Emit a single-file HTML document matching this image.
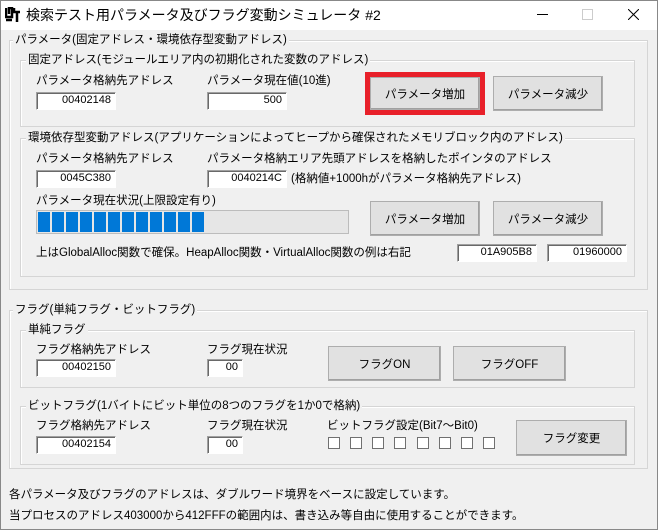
<!DOCTYPE html>
<html><head><meta charset="utf-8"><style>
*{box-sizing:border-box;margin:0;padding:0}
body{width:658px;height:530px;background:#f0f0f0;position:relative;overflow:hidden;font-family:"Liberation Sans","Noto Sans CJK JP",sans-serif;font-size:11.5px;color:#000}
.a{position:absolute;white-space:nowrap;line-height:14px}
.title{position:absolute;left:0;top:0;width:658px;height:30px;background:#fff}
.win{position:absolute;left:0;top:0;width:658px;height:530px;border:1px solid #888}
.g{position:absolute;border:1px solid #d5d5d5;box-shadow:inset 1px 1px 0 #fff}
.gl{position:absolute;background:#f0f0f0;padding:0 2px;line-height:14px;white-space:nowrap}
.e{position:absolute;background:#fff;border-top:1px solid #a0a0a0;border-left:1px solid #a0a0a0;border-bottom:1px solid #fff;border-right:1px solid #fff;box-shadow:inset 1px 1px 0 #696969;text-align:right;padding-right:4px;line-height:15px;font-size:11px}
.b{position:absolute;background:#e1e1e1;border:1px solid #adadad;box-shadow:inset -1px -1px 0 #a0a0a0;display:flex;align-items:center;justify-content:center}
.c{position:absolute;width:12px;height:12px;border:1px solid #707070;background:#fff;top:437px}
</style></head><body>
<div class="title"></div>
<svg class="a" style="left:5px;top:7px" width="16" height="16"><rect x="0" y="0" width="16" height="16" fill="#fff"/><path d="M1 1v9h6v-9h-3v6h-0M9 1v4h6M12 5v10M1 13h6" stroke="#000" stroke-width="2.5" fill="none"/></svg>
<div class="a" style="left:26px;top:7px;font-size:14px;line-height:16px">検索テスト用パラメータ及びフラグ変動シミュレータ #2</div>
<div class="a" style="left:537px;top:14px;width:11px;height:1px;background:#000"></div>
<div class="a" style="left:582px;top:9px;width:11px;height:11px;border:1px solid #ccc"></div>
<svg class="a" style="left:628px;top:9px" width="11" height="11"><path d="M0 0L11 11M11 0L0 11" stroke="#000" stroke-width="1"/></svg>
<div class="win"></div>

<div class="g" style="left:9px;top:40px;width:639px;height:250px"></div>
<div class="gl" style="left:13px;top:33px">パラメータ(固定アドレス・環境依存型変動アドレス)</div>
<div class="g" style="left:20px;top:60px;width:615px;height:67px"></div>
<div class="gl" style="left:26px;top:53px">固定アドレス(モジュールエリア内の初期化された変数のアドレス)</div>
<div class="a" style="left:36px;top:74px">パラメータ格納先アドレス</div>
<div class="a" style="left:207px;top:74px">パラメータ現在値(10進)</div>
<div class="e" style="left:36px;top:92px;width:80px;height:18px">00402148</div>
<div class="e" style="left:207px;top:92px;width:80px;height:18px">500</div>
<div class="a" style="left:365px;top:72px;width:120px;height:43px;border:5px solid #e8202a"></div>
<div class="b" style="left:370px;top:77px;width:110px;height:33px">パラメータ増加</div>
<div class="b" style="left:493px;top:76px;width:110px;height:35px">パラメータ減少</div>

<div class="g" style="left:20px;top:138px;width:615px;height:139px"></div>
<div class="gl" style="left:26px;top:131px">環境依存型変動アドレス(アプリケーションによってヒープから確保されたメモリブロック内のアドレス)</div>
<div class="a" style="left:36px;top:152px">パラメータ格納先アドレス</div>
<div class="a" style="left:207px;top:152px">パラメータ格納エリア先頭アドレスを格納したポインタのアドレス</div>
<div class="e" style="left:36px;top:170px;width:80px;height:18px">0045C380</div>
<div class="e" style="left:207px;top:170px;width:80px;height:18px">0040214C</div>
<div class="a" style="left:291px;top:172px">(格納値+1000hがパラメータ格納先アドレス)</div>
<div class="a" style="left:36px;top:194px">パラメータ現在状況(上限設定有り)</div>
<div class="a" style="left:36px;top:210px;width:313px;height:24px;border:1px solid #bcbcbc;background:#e6e6e6"></div>
<div class="a" style="left:38px;top:212px;width:166px;height:20px;background:repeating-linear-gradient(90deg,#0078d7 0 12px,#e6e6e6 12px 14px)"></div>
<div class="b" style="left:370px;top:201px;width:110px;height:35px">パラメータ増加</div>
<div class="b" style="left:493px;top:201px;width:110px;height:35px">パラメータ減少</div>
<div class="a" style="left:36px;top:246px">上はGlobalAlloc関数で確保。HeapAlloc関数・VirtualAlloc関数の例は右記</div>
<div class="e" style="left:457px;top:244px;width:80px;height:18px">01A905B8</div>
<div class="e" style="left:547px;top:244px;width:80px;height:18px">01960000</div>

<div class="g" style="left:9px;top:310px;width:639px;height:159px"></div>
<div class="gl" style="left:13px;top:303px">フラグ(単純フラグ・ビットフラグ)</div>
<div class="g" style="left:20px;top:330px;width:615px;height:58px"></div>
<div class="gl" style="left:26px;top:323px">単純フラグ</div>
<div class="a" style="left:36px;top:343px">フラグ格納先アドレス</div>
<div class="a" style="left:207px;top:343px">フラグ現在状況</div>
<div class="e" style="left:36px;top:359px;width:80px;height:18px">00402150</div>
<div class="e" style="left:207px;top:359px;width:36px;height:18px">00</div>
<div class="b" style="left:328px;top:346px;width:113px;height:35px">フラグON</div>
<div class="b" style="left:453px;top:346px;width:113px;height:35px">フラグOFF</div>

<div class="g" style="left:20px;top:406px;width:615px;height:59px"></div>
<div class="gl" style="left:26px;top:399px">ビットフラグ(1バイトにビット単位の8つのフラグを1か0で格納)</div>
<div class="a" style="left:36px;top:419px">フラグ格納先アドレス</div>
<div class="a" style="left:207px;top:419px">フラグ現在状況</div>
<div class="a" style="left:327px;top:419px">ビットフラグ設定(Bit7～Bit0)</div>
<div class="e" style="left:36px;top:436px;width:80px;height:18px">00402154</div>
<div class="e" style="left:207px;top:436px;width:36px;height:18px">00</div>
<div class="c" style="left:328px"></div><div class="c" style="left:350px"></div><div class="c" style="left:372px"></div><div class="c" style="left:394px"></div>
<div class="c" style="left:417px"></div><div class="c" style="left:439px"></div><div class="c" style="left:461px"></div><div class="c" style="left:483px"></div>
<div class="b" style="left:516px;top:420px;width:111px;height:36px">フラグ変更</div>

<div class="a" style="left:9px;top:488px">各パラメータ及びフラグのアドレスは、ダブルワード境界をベースに設定しています。</div>
<div class="a" style="left:9px;top:509px">当プロセスのアドレス403000から412FFFの範囲内は、書き込み等自由に使用することができます。</div>
</body></html>
